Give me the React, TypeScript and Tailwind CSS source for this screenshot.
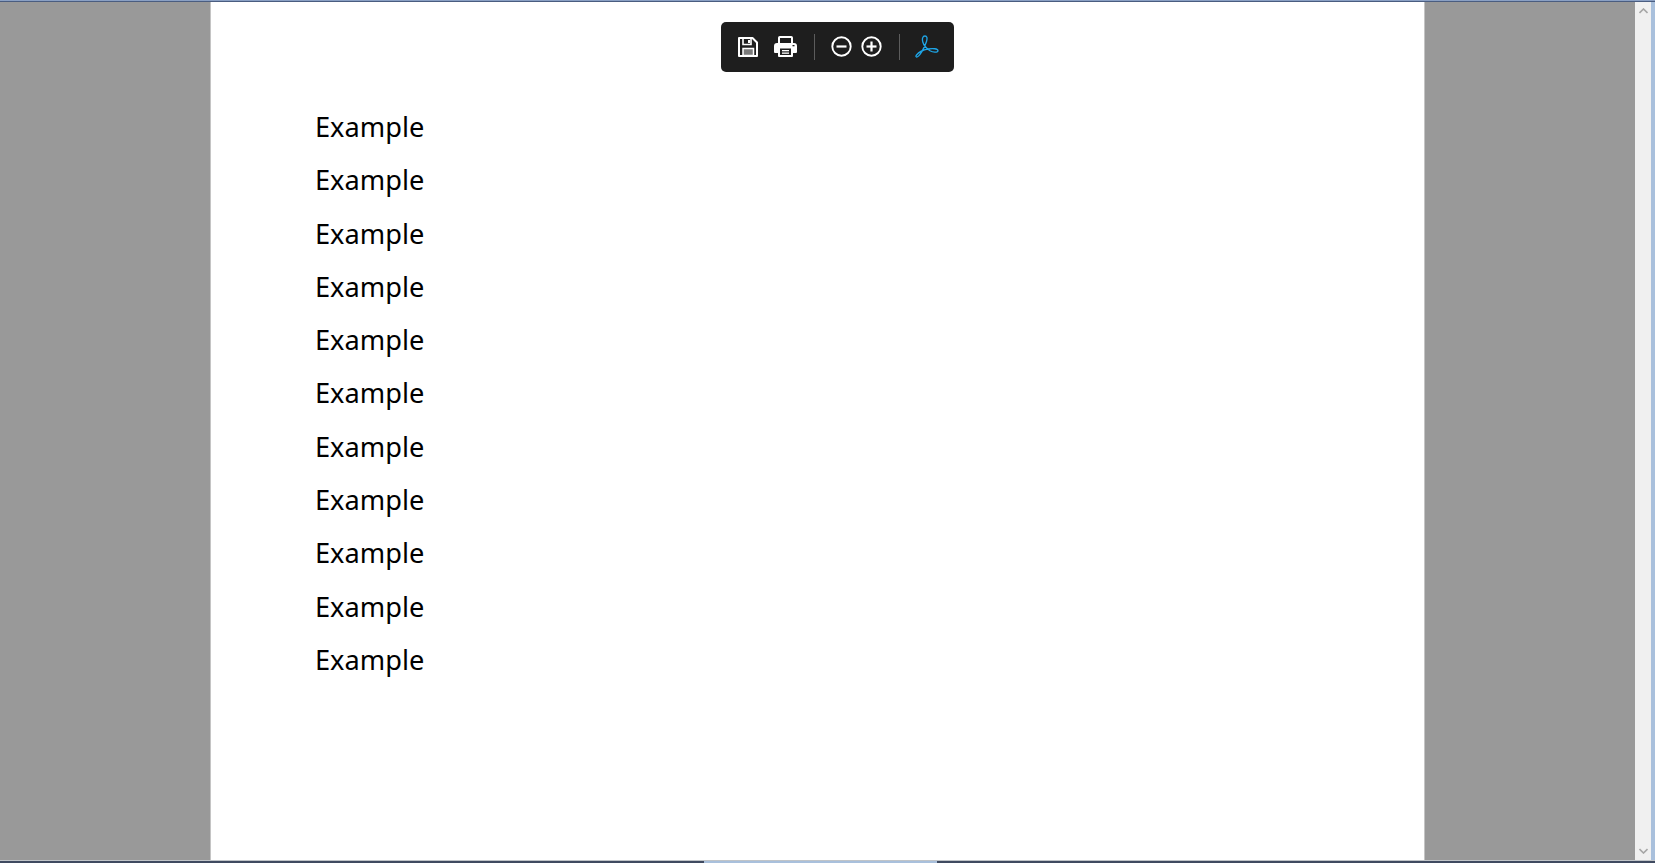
const rows = Array.from({ length: 11 });

const SaveIcon = () => (
  <svg className="-mt-px" width="20" height="20" viewBox="0 0 20 20" fill="none">
    <path d="M1 1h13.500L19 5.500V19H1z" stroke="#fff" strokeWidth="2" strokeLinejoin="round" />
    <path d="M5 1.500v6h8v-6" stroke="#fff" strokeWidth="1.600" />
    <rect x="10" y="3" width="2" height="3" fill="#fff" />
    <rect x="5" y="11.500" width="10.500" height="7" fill="#7a7a7a" stroke="#fff" strokeWidth="1.500" />
  </svg>
);

const PrintIcon = () => (
  <svg className="-mt-px" width="23" height="21" viewBox="0 0 23 21" fill="none">
    <path d="M5 7V1.800A.8.8 0 0 1 5.800 1h11.400a.8.8 0 0 1 .8.8V7" stroke="#fff" strokeWidth="2" />
    <path d="M3 7h17a3 3 0 0 1 3 3v6a1 1 0 0 1-1 1h-3v3a1 1 0 0 1-1 1H5a1 1 0 0 1-1-1v-3H1a1 1 0 0 1-1-1v-6a3 3 0 0 1 3-3z" fill="#fff" />
    <rect x="6" y="12.500" width="11" height="6.500" fill="#1e1e1e" />
    <rect x="8" y="14" width="7" height="1.300" fill="#fff" />
    <rect x="8" y="16.500" width="7" height="1.300" fill="#fff" />
    <rect x="18.500" y="9" width="2" height="1.300" fill="#1e1e1e" />
  </svg>
);

const ZoomIcon = ({ plus }: { plus?: boolean }) => (
  <svg className="-mt-px" width="21" height="21" viewBox="0 0 21 21" fill="none">
    <circle cx="10.500" cy="10.500" r="9.200" stroke="#fff" strokeWidth="1.900" />
    <path d="M5.500 10.500h10" stroke="#fff" strokeWidth="2.200" />
    {plus && <path d="M10.500 5.500v10" stroke="#fff" strokeWidth="2.200" />}
  </svg>
);

const AcrobatIcon = () => (
  <svg className="-mt-px" width="24" height="23" viewBox="0 0 24 23" fill="none">
    <path
      d="M1.500 22C4 22.500 9.500 13 11.500 6.500 12.500 3 12 1 10 1 7.500 1 7 4 7.800 7c1 3.500 3.700 6.500 7.200 8.800 2.500 1.500 8 2.200 8 0 0-2.300-5.500-2.600-10-1.800-5 .9-9.500 3.500-11.500 6-.8 1-.8 1.700 0 2z"
      stroke="#1ea5e6"
      strokeWidth="1.300"
      strokeLinejoin="round"
    />
  </svg>
);

export default function App() {
  return (
    <div className="flex flex-col h-[863px] w-[1655px] overflow-hidden bg-[#999999]">
      <div className="h-px shrink-0 bg-[#8aa0c4]" />
      <div className="h-px shrink-0 bg-[#4a5d80]" />
      <div className="flex flex-1 min-h-0">
        <main className="flex-1 pl-[210px] bg-[#999999]">
          <div className="relative w-[1215px] h-full bg-white border-x border-x-[#c4c4c4] pl-[104px] pt-[98px] font-['Noto_Sans',sans-serif] text-[27.2px] leading-[53.3px] text-black">
            <div className="absolute top-[20px] left-[510px] flex items-center h-[50px] w-[233px] rounded-[5px] bg-[#1e1e1e] pl-[17px]">
              <SaveIcon />
              <div className="w-[16px]" />
              <PrintIcon />
              <div className="w-px h-[26px] bg-[#5c5c5c] ml-[17px] mr-[16px]" />
              <ZoomIcon />
              <div className="w-[9px]" />
              <ZoomIcon plus />
              <div className="w-px h-[26px] bg-[#5c5c5c] ml-[17px] mr-[15px]" />
              <AcrobatIcon />
            </div>
            {rows.map((_, i) => (
              <p key={i}>Example</p>
            ))}
          </div>
        </main>
        <aside className="flex flex-col items-center justify-between w-[16px] shrink-0 bg-[#f0f0f0] py-[6px] text-[#a6a6a6]">
          <svg width="9" height="6" viewBox="0 0 9 6" fill="none">
            <path d="M.5 5l4-4 4 4" stroke="currentColor" strokeWidth="1.600" />
          </svg>
          <svg width="9" height="6" viewBox="0 0 9 6" fill="none">
            <path d="M.5 1l4 4 4-4" stroke="currentColor" strokeWidth="1.600" />
          </svg>
        </aside>
        <div className="w-[4px] shrink-0 bg-[#a9c0dc]" />
      </div>
      <div className="h-px shrink-0 bg-[#c0c4c8]" />
      <div className="flex h-[2px] shrink-0 bg-[#3f4a60]">
        <div className="ml-[704px] w-[233px] bg-[#a9c0dc]" />
      </div>
    </div>
  );
}
